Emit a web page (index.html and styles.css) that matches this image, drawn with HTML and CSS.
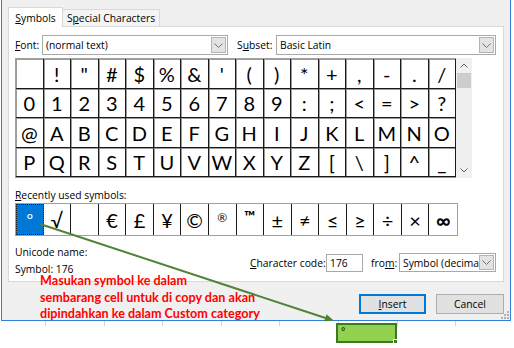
FILE: index.html
```html
<!DOCTYPE html>
<html>
<head>
<meta charset="utf-8">
<title>Symbol</title>
<link rel="stylesheet" href="styles.css">
</head>
<body>
<div class="dialog">
  <div class="tabs">
    <div class="tab tab-active"><u>S</u>ymbols</div>
    <div class="tab tab-idle">S<u>p</u>ecial Characters</div>
  </div>
  <div class="panel">
    <div class="font-row">
      <span class="lbl lbl-font"><u>F</u>ont:</span>
      <div class="combo combo-font">
        <span class="combo-text">(normal text)</span>
        <span class="drop"><svg width="9" height="5" viewBox="0 0 9 5"><path d="M0.5 0.5 L4.5 4.5 L8.5 0.5" fill="none" stroke="#707070" stroke-width="1"/></svg></span>
      </div>
      <span class="lbl lbl-subset">S<u>u</u>bset:</span>
      <div class="combo combo-subset">
        <span class="combo-text">Basic Latin</span>
        <span class="drop"><svg width="9" height="5" viewBox="0 0 9 5"><path d="M0.5 0.5 L4.5 4.5 L8.5 0.5" fill="none" stroke="#707070" stroke-width="1"/></svg></span>
      </div>
    </div>

    <div class="grid-area">
      <div class="charmap">
        <div class="c"></div><div class="c">!</div><div class="c">&quot;</div><div class="c">#</div><div class="c">$</div><div class="c">%</div><div class="c">&amp;</div><div class="c">'</div><div class="c">(</div><div class="c">)</div><div class="c">*</div><div class="c">+</div><div class="c">,</div><div class="c">-</div><div class="c">.</div><div class="c">/</div>
        <div class="c">0</div><div class="c">1</div><div class="c">2</div><div class="c">3</div><div class="c">4</div><div class="c">5</div><div class="c">6</div><div class="c">7</div><div class="c">8</div><div class="c">9</div><div class="c">:</div><div class="c">;</div><div class="c">&lt;</div><div class="c">=</div><div class="c">&gt;</div><div class="c">?</div>
        <div class="c">@</div><div class="c">A</div><div class="c">B</div><div class="c">C</div><div class="c">D</div><div class="c">E</div><div class="c">F</div><div class="c">G</div><div class="c">H</div><div class="c">I</div><div class="c">J</div><div class="c">K</div><div class="c">L</div><div class="c">M</div><div class="c">N</div><div class="c">O</div>
        <div class="c">P</div><div class="c">Q</div><div class="c">R</div><div class="c">S</div><div class="c">T</div><div class="c">U</div><div class="c">V</div><div class="c">W</div><div class="c">X</div><div class="c">Y</div><div class="c">Z</div><div class="c">[</div><div class="c">\</div><div class="c">]</div><div class="c">^</div><div class="c">_</div>
      </div>
      <div class="vscroll">
        <div class="sb-arrow"><svg width="8" height="5" viewBox="0 0 8 5"><path d="M0.5 4.5 L4 1 L7.5 4.5" fill="none" stroke="#606060" stroke-width="1"/></svg></div>
        <div class="sb-thumb"></div>
        <div class="sb-track"></div>
        <div class="sb-arrow"><svg width="8" height="5" viewBox="0 0 8 5"><path d="M0.5 0.5 L4 4 L7.5 0.5" fill="none" stroke="#606060" stroke-width="1"/></svg></div>
      </div>
    </div>

    <div class="recent-label"><u>R</u>ecently used symbols:</div>
    <div class="recent">
      <div class="r r-sel"><span class="deg">°</span></div>
      <div class="r">√</div>
      <div class="r"></div>
      <div class="r">€</div>
      <div class="r">£</div>
      <div class="r">¥</div>
      <div class="r">©</div>
      <div class="r r-small">®</div>
      <div class="r r-tm">™</div>
      <div class="r">±</div>
      <div class="r">≠</div>
      <div class="r">≤</div>
      <div class="r">≥</div>
      <div class="r">÷</div>
      <div class="r">×</div>
      <div class="r r-inf">∞</div>
    </div>

    <div class="info-row">
      <div class="info-left">
        <div class="info-line">Unicode name:</div>
        <div class="info-line">Symbol: 176</div>
      </div>
      <div class="code-group">
        <span class="lbl lbl-code"><u>C</u>haracter code:</span>
        <div class="code-input">176</div>
        <span class="lbl lbl-from">fro<u>m</u>:</span>
        <div class="combo combo-from">
          <span class="combo-text">Symbol (decimal)</span>
          <span class="drop"><svg width="9" height="5" viewBox="0 0 9 5"><path d="M0.5 0.5 L4.5 4.5 L8.5 0.5" fill="none" stroke="#707070" stroke-width="1"/></svg></span>
        </div>
      </div>
    </div>
  </div>

  <div class="footer">
    <div class="btn btn-default"><u>I</u>nsert</div>
    <div class="btn">Cancel</div>
  </div>
  <svg class="grip" width="8" height="8" viewBox="0 0 8 8">
    <rect x="6" y="0" width="2" height="2" fill="#b0b0b0"/>
    <rect x="3" y="3" width="2" height="2" fill="#b0b0b0"/>
    <rect x="6" y="3" width="2" height="2" fill="#b0b0b0"/>
    <rect x="0" y="6" width="2" height="2" fill="#b0b0b0"/>
    <rect x="3" y="6" width="2" height="2" fill="#b0b0b0"/>
    <rect x="6" y="6" width="2" height="2" fill="#b0b0b0"/>
  </svg>
</div>

<div class="sheet">
  <div class="col"></div>
  <div class="col"></div>
  <div class="col"></div>
  <div class="col"></div>
  <div class="col"></div>
  <div class="col"><div class="green-cell"><span>°</span><i class="handle"></i></div></div>
  <div class="col"></div>
  <div class="col"></div>
</div>

<svg class="arrow" width="514" height="348" viewBox="0 0 514 348">
  <line x1="40" y1="224" x2="327" y2="318.5" stroke="#548235" stroke-width="2"/>
  <polygon points="334,320.8 324.2,321.2 326.6,314.2" fill="#548235"/>
</svg>

<div class="note">Masukan symbol ke dalam<br>sembarang cell untuk di copy dan akan<br>dipindahkan ke dalam Custom category</div>
</body>
</html>
```

FILE: styles.css
```css
* { box-sizing: border-box; }
html, body { margin: 0; padding: 0; }
body {
  width: 514px;
  height: 348px;
  overflow: hidden;
  position: relative;
  background: #fff;
  font-family: "Open Sans", "Noto Sans", sans-serif;
  font-size: 10.3px;
  color: #000;
}
u { text-decoration: underline; text-underline-offset: 1px; }

.dialog {
  position: relative;
  margin-left: 1px;
  width: 510px;
  height: 321px;
  background: #f0f0f0;
  border: 1px solid #2f80d6;
  border-top: none;
  padding: 7px 6px 6px 6px;
  display: flex;
  flex-direction: column;
}

.tabs { display: flex; align-items: flex-end; height: 19px; }
.tab {
  display: flex;
  align-items: center;
  justify-content: center;
  border: 1px solid #d9d9d9;
  border-bottom: none;
  white-space: nowrap;
}
.tab-active {
  width: 55px;
  height: 20px;
  margin-bottom: -1px;
  background: #fff;
  position: relative;
  z-index: 1;
  padding-top: 1px;
}
.tab-idle {
  width: 97px;
  height: 17px;
  background: #f4f4f4;
  border-left: none;
}

.panel {
  height: 256px;
  background: #fff;
  border: 1px solid #d9d9d9;
  padding: 8px 6px 0 6px;
  display: flex;
  flex-direction: column;
}

.font-row { display: flex; align-items: center; height: 20px; }
.lbl { white-space: nowrap; }
.lbl-font { width: 27px; }
.lbl-subset { width: 39px; margin-left: 9px; }

.combo {
  display: flex;
  align-items: center;
  height: 20px;
  background: #fff;
  border: 1px solid #a9a9a9;
  padding: 1px;
}
.combo-font { width: 186px; }
.combo-subset { width: 220px; }
.combo-text { flex: 1; padding-left: 2px; white-space: nowrap; overflow: hidden; }
.drop {
  width: 15px;
  height: 100%;
  background: #e3e3e3;
  border: 1px solid #b4b4b4;
  display: flex;
  align-items: center;
  justify-content: center;
}

.grid-area { display: flex; margin-top: 3px; height: 120px; }
.charmap {
  width: 441px;
  height: 119px;
  display: grid;
  grid-template-columns: repeat(16, 1fr);
  grid-template-rows: repeat(4, 1fr);
  border-top: 1px solid #a0a0a0;
  border-left: 1px solid #a0a0a0;
  box-shadow: 0 1px 0 #9a9a9a;
}
.c {
  border-right: 1px solid #1a1a1a;
  border-bottom: 1px solid #1a1a1a;
  box-shadow: inset 1px 1px 0 #9c9c9c;
  display: flex;
  align-items: center;
  justify-content: center;
  font-family: "Lato", "DejaVu Sans", sans-serif;
  font-size: 20px;
  line-height: 1;
  padding-top: 1px;
}

.vscroll {
  width: 16px;
  height: 120px;
  background: #f0f0f0;
  display: flex;
  flex-direction: column;
}
.sb-arrow { height: 15px; display: flex; align-items: center; justify-content: center; }
.sb-thumb { height: 15px; margin: 0 1px; background: #cdcdcd; }
.sb-track { flex: 1; }

.recent-label { margin-top: 9px; height: 16px; line-height: 16px; }
.recent {
  width: 443px;
  height: 33px;
  display: grid;
  grid-template-columns: repeat(16, 1fr);
  border: 1px solid #a0a0a0;
}
.r {
  border-right: 1px solid #1a1a1a;
  display: flex;
  align-items: center;
  justify-content: center;
  font-family: "Lato", "DejaVu Sans", sans-serif;
  font-size: 20px;
  line-height: 1;
}
.r:last-child { border-right: none; }
.r-sel {
  background: #0078d7;
  color: #fff;
  border: 1px dotted #222;
  align-items: flex-start;
  padding-top: 6px;
  font-size: 16px;
}
.r-small { font-size: 12px; align-items: flex-start; padding-top: 8px; }
.r-tm { font-size: 15px; font-weight: bold; align-items: flex-start; padding-top: 5px; }
.r-inf { font-weight: bold; }

.info-row { display: flex; }
.info-left { width: 235px; padding-top: 8px; }
.info-line { height: 17px; line-height: 17px; white-space: nowrap; }
.code-group { display: flex; align-items: center; margin-top: 17px; height: 19px; }
.lbl-code { width: 76px; }
.code-input {
  width: 37px;
  height: 18px;
  border: 1px solid #a9a9a9;
  background: #fff;
  padding-left: 3px;
  line-height: 16px;
}
.lbl-from { width: 28px; margin-left: 8px; }
.combo-from { width: 97px; height: 19px; }

.footer {
  display: flex;
  justify-content: flex-end;
  gap: 10px;
  margin-top: 12px;
  height: 20px;
}
.btn {
  width: 68px;
  height: 20px;
  background: #e1e1e1;
  border: 1px solid #adadad;
  display: flex;
  align-items: center;
  justify-content: center;
}
.btn-default {
  width: 67px;
  border: 2px solid #0078d7;
}

.grip { position: absolute; right: 1px; bottom: 1px; }

.sheet { display: flex; height: 27px; padding-left: 45px; }
.col {
  width: 59px;
  height: 27px;
  background: linear-gradient(#d4d4d4, #d4d4d4) left top / 1px 5px no-repeat;
}
.green-cell {
  position: relative;
  width: 61px;
  height: 20px;
  margin: 2px 0 0 -2px;
  background: #92d050;
  border: 2px solid #3b7a25;
  font-size: 10px;
  line-height: 12px;
  padding-left: 3px;
}
.handle {
  position: absolute;
  right: -3px;
  bottom: -3px;
  width: 5px;
  height: 5px;
  background: #3b7a25;
  border: 1px solid #fff;
}

.arrow { position: absolute; left: 0; top: 0; pointer-events: none; }

.note {
  position: absolute;
  left: 40px;
  top: 273px;
  font-family: "Lato", "Open Sans", sans-serif;
  font-weight: bold;
  font-size: 12.6px;
  line-height: 16.5px;
  color: #ff0000;
  white-space: nowrap;
}
```
